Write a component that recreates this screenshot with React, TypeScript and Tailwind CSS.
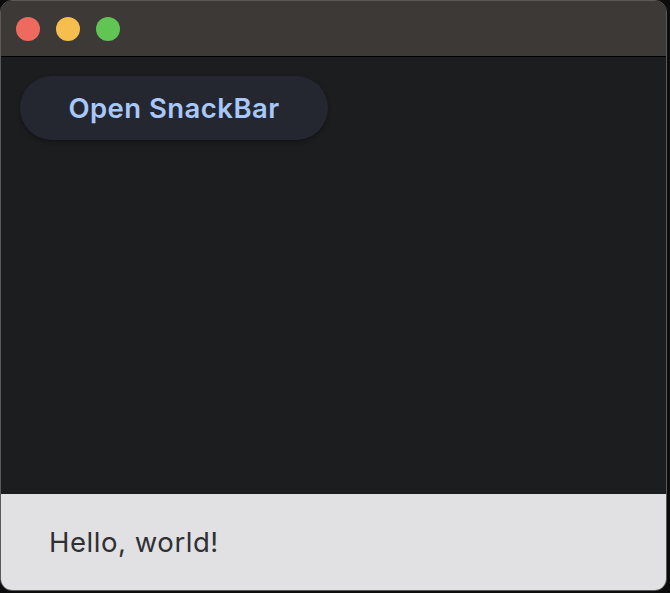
import React from "react";

const TrafficLight: React.FC<{ color: string }> = ({ color }) => (
  <div className={`h-[24px] w-[24px] rounded-full ${color}`} />
);

export default function App() {
  return (
    <div className="h-[593px] w-[670px] bg-[#0c0c0c] font-['Inter','Roboto',sans-serif]">
      <div className="flex h-[591px] w-[667px] flex-col overflow-hidden rounded-[12px] border border-[#5c5957]">
        {/* title bar */}
        <div className="flex h-[56px] shrink-0 items-center gap-[16px] border-b border-black bg-[#3d3936] pl-[15px]">
          <TrafficLight color="bg-[#ee6a5f]" />
          <TrafficLight color="bg-[#f5be4f]" />
          <TrafficLight color="bg-[#61c554]" />
        </div>

        {/* body */}
        <div className="flex-1 bg-[#1c1d1f] pl-[19px] pt-[19px]">
          <button className="flex h-[64px] w-[308px] items-center justify-center rounded-full bg-[#24272f] pt-[1px] text-[27.5px] font-semibold tracking-[0.45px] text-[#a8c7fa] shadow-[0_2px_4px_rgba(0,0,0,0.35)]">
            Open SnackBar
          </button>
        </div>

        {/* snackbar */}
        <div className="flex h-[96px] shrink-0 items-center bg-[#e1e1e3] pl-[48px] pt-[1px] text-[27.5px] tracking-[0.55px] text-[#2f3033]">
          Hello, world!
        </div>
      </div>
    </div>
  );
}
